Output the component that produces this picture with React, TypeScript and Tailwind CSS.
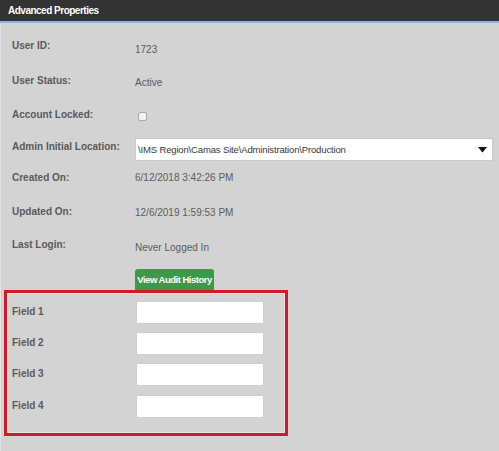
import React from "react";

const font = { fontFamily: '"Liberation Sans", Arial, sans-serif' };

function Row({
  h,
  label,
  children,
  labelCls = "",
}: {
  h: string;
  label: string;
  children?: React.ReactNode;
  labelCls?: string;
}) {
  return (
    <div className={`flex items-center ${h}`}>
      <div className={`w-[123px] shrink-0 text-[10px] leading-[12px] font-bold text-[#5a5a5a] ${labelCls}`}>{label}</div>
      {children}
    </div>
  );
}

export default function App() {
  return (
    <div className="w-[499px] h-[451px] bg-[#d3d3d3] overflow-hidden" style={font}>
      <div className="h-[21px] bg-[#333333] flex items-center pl-[8px] border-b-[2px] border-[#93b1d6] box-content">
        <span className="text-white font-bold text-[10px] leading-[12px] tracking-[-0.5px]">Advanced Properties</span>
      </div>
      <div className="border-l border-[#e4e4e4] h-[428px]">
        <div className="pl-[11px] pt-[6px]">
          <Row h="h-[34px]" label="User ID:">
            <span className="text-[10px] leading-[12px] text-[#5c5c5c] pt-[7px]">1723</span>
          </Row>
          <Row h="h-[36px]" label="User Status:">
            <span className="text-[10px] leading-[12px] text-[#5c5c5c] pt-[4px]">Active</span>
          </Row>
          <Row h="h-[32px]" label="Account Locked:">
            <span className="ml-[3px] mt-[3px] w-[9px] h-[9px] rounded-[2px] border border-[#a8a8a8] bg-[#f3f3f3]" />
          </Row>
          <Row h="h-[32px]" label="Admin Initial Location:">
            <div className="mt-[5px] w-[358px] h-[23px] bg-white border border-[#c9c9c9] flex items-center justify-between pl-[2px] pr-[5px]">
              <span className="text-[9.5px] leading-[12px] text-[#383838] tracking-[-0.15px]">
                \IMS Region\Camas Site\Administration\Production
              </span>
              <svg width="9" height="6" viewBox="0 0 9 6">
                <path d="M0 0 L9 0 L4.5 5.5 Z" fill="#111" />
              </svg>
            </div>
          </Row>
          <Row h="h-[30px]" label="Created On:">
            <span className="text-[10px] leading-[12px] text-[#5c5c5c]">6/12/2018 3:42:26 PM</span>
          </Row>
          <Row h="h-[38px]" label="Updated On:">
            <span className="text-[10px] leading-[12px] text-[#5c5c5c] pt-[2px]">12/6/2019 1:59:53 PM</span>
          </Row>
          <Row h="h-[30px]" label="Last Login:" labelCls="pb-[2px]">
            <span className="text-[10px] leading-[12px] text-[#5c5c5c] pt-[3px]">Never Logged In</span>
          </Row>
          <div className="pl-[123px] mt-[8px]">
            <div className="w-[79px] h-[21px] bg-[#3b9a49] rounded-t-[3px] flex items-center justify-center">
              <span className="text-white font-bold text-[9.5px] leading-[12px] tracking-[-0.5px]">View Audit History</span>
            </div>
          </div>
        </div>
        <div className="ml-[3px] w-[284px] h-[146px] border-[3px] border-[#d2192b]">
          <div className="h-full border border-[#e2e6ea] pt-[7px] pl-[4px] flex flex-col gap-[8px]">
            {["Field 1", "Field 2", "Field 3", "Field 4"].map((f, i) => (
              <div key={f} className={`flex items-center h-[23px] ${i === 3 ? "mt-[1px]" : ""}`}>
                <div className="w-[124px] shrink-0 text-[10px] leading-[12px] font-bold text-[#5a5a5a] pb-[2px]">{f}</div>
                <div className="w-[128px] h-[23px] bg-white border border-[#cfcfcf] rounded-[1px]" />
              </div>
            ))}
          </div>
        </div>
      </div>
    </div>
  );
}
